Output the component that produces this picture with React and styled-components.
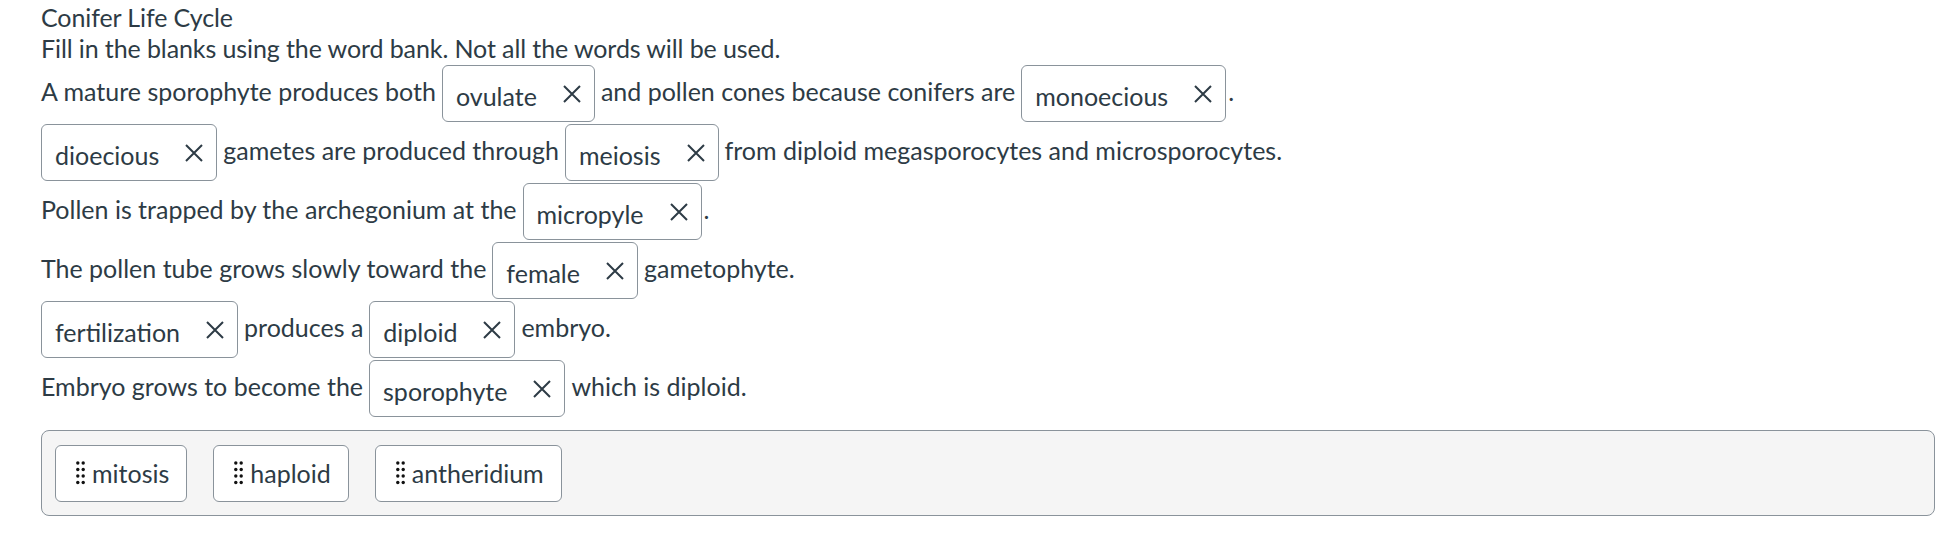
import React from 'react';
import styled, { createGlobalStyle } from 'styled-components';

const GlobalStyle = createGlobalStyle`
  html, body {
    margin: 0;
    padding: 0;
    background: #ffffff;
  }
  body {
    font-family: Lato, "Noto Sans", sans-serif;
    color: #2d3b45;
  }
`;

// style
const PageStyle = styled.div`
  display: flex;
  flex-direction: column;
  padding: 2px 15px 0 41px;
`;
const HeadingStyle = styled.div`
  font-size: 25px;
  line-height: 31px;
  letter-spacing: -0.1px;
`;
const RowStyle = styled.div`
  display: flex;
  flex-wrap: wrap;
  align-items: center;
  min-height: 57px;
  margin-top: ${props => (props.first ? '1px' : '2px')};
  font-size: 25px;
  line-height: 31px;
`;
const TextStyle = styled.span`
  white-space: pre;
  margin-bottom: 5px;
`;
const BlankStyle = styled.span`
  display: inline-flex;
  align-items: center;
  justify-content: space-between;
  box-sizing: border-box;
  height: 57px;
  margin: 0 ${props => (props.tight ? '2px' : '6px')} 0 6px;
  padding: 6px 13px 0 13px;
  border: 1px solid #8a939b;
  border-radius: 6px;
  background: #ffffff;
  font-size: 25px;
  &:first-child {
    margin-left: 0;
  }
`;
const BlankWordStyle = styled.span`
  margin-right: 26px;
`;
const CloseIconStyle = styled.svg`
  width: 18px;
  height: 18px;
  margin-top: -6px;
  flex-shrink: 0;
`;
const WordBankStyle = styled.div`
  display: flex;
  align-items: center;
  gap: 26px;
  box-sizing: border-box;
  height: 86px;
  margin-top: 13px;
  padding: 0 13px;
  background: #f5f5f5;
  border: 1px solid #8a939b;
  border-radius: 8px;
`;
const ChipStyle = styled.div`
  display: flex;
  align-items: center;
  gap: 7px;
  box-sizing: border-box;
  height: 57px;
  padding: 0 17px 0 20px;
  background: #ffffff;
  border: 1px solid #8a939b;
  border-radius: 6px;
  font-size: 25px;
  cursor: grab;
`;
const HandleStyle = styled.svg`
  width: 9px;
  height: 24px;
  flex-shrink: 0;
`;

const CloseIcon = () => (
  <CloseIconStyle viewBox="0 0 18 18">
    <path d="M1 1 L17 17 M17 1 L1 17" stroke="#2d3b45" strokeWidth="2" fill="none" />
  </CloseIconStyle>
);

const Handle = () => (
  <HandleStyle viewBox="0 0 9 24">
    {[2, 8.5, 15, 21.5].map(y => (
      <g key={y}>
        <circle cx="1.8" cy={y} r="1.7" fill="#111" />
        <circle cx="7.2" cy={y} r="1.7" fill="#111" />
      </g>
    ))}
  </HandleStyle>
);

const Blank = props => (
  <BlankStyle tight={props.tight}>
    <BlankWordStyle>{props.word}</BlankWordStyle>
    <CloseIcon />
  </BlankStyle>
);

const sentences = [
  ['A mature sporophyte produces both', { w: 'ovulate' }, 'and pollen cones because conifers are', { w: 'monoecious' }, '.'],
  [{ w: 'dioecious' }, 'gametes are produced through', { w: 'meiosis' }, 'from diploid megasporocytes and microsporocytes.'],
  ['Pollen is trapped by the archegonium at the', { w: 'micropyle' }, '.'],
  ['The pollen tube grows slowly toward the', { w: 'female' }, 'gametophyte.'],
  [{ w: 'fertilization' }, 'produces a', { w: 'diploid' }, 'embryo.'],
  ['Embryo grows to become the', { w: 'sporophyte' }, 'which is diploid.'],
];

const bank = ['mitosis', 'haploid', 'antheridium'];

const App = () => {
  return (
    <PageStyle>
      <GlobalStyle />
      <HeadingStyle>Conifer Life Cycle</HeadingStyle>
      <HeadingStyle>Fill in the blanks using the word bank. Not all the words will be used.</HeadingStyle>
      {sentences.map((parts, index) => (
        <RowStyle key={index} first={index === 0}>
          {parts.map((part, i) =>
            typeof part === 'string' ? (
              <TextStyle key={i}>{part}</TextStyle>
            ) : (
              <Blank key={i} word={part.w} tight={parts[i + 1] === '.'} />
            )
          )}
        </RowStyle>
      ))}
      <WordBankStyle>
        {bank.map(word => (
          <ChipStyle key={word}>
            <Handle />
            <span>{word}</span>
          </ChipStyle>
        ))}
      </WordBankStyle>
    </PageStyle>
  );
};

export default App;
